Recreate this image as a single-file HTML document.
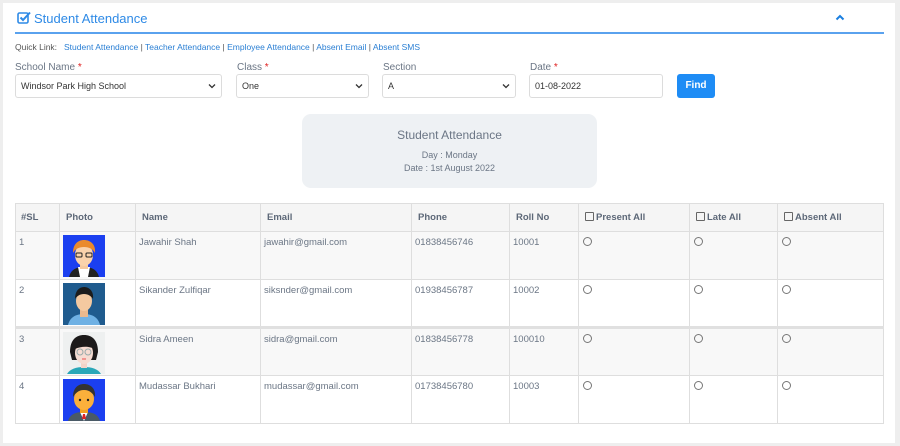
<!DOCTYPE html>
<html><head><style>
*{box-sizing:border-box;margin:0;padding:0}
body{width:900px;height:446px;background:#eeeeee;font-family:"Liberation Sans",sans-serif;position:relative;overflow:hidden;color:#6b7685}
.card{position:absolute;left:3px;top:3px;width:892px;height:440px;background:#fff}
.a{position:absolute;white-space:nowrap}
.sel{position:absolute;height:24px;border:1px solid #dcdcdc;border-radius:3px;background:#fff;font-size:9px;color:#333;padding:6px 5px;}
.sel svg{position:absolute;right:5px;top:8px}
.lbl{position:absolute;font-size:10px;color:#6b7685}
.lbl b{color:#e02020;font-weight:normal}
table{position:absolute;left:15px;top:203px;width:869px;border-collapse:collapse;font-size:9.5px}
td,th{border:1px solid #dedede;vertical-align:top;text-align:left;padding:0 3px;color:#6b7685}
th{height:28px;vertical-align:middle;font-weight:bold;background:#f5f5f5;color:#5d6878;padding:0 6px}
tr.r td{height:48px;padding-top:5px}
tr.g td{background:#f8f8f8}
.rad{display:inline-block;width:9px;height:9px;border:1px solid #777;border-radius:50%;margin-left:1px}
.cb{display:inline-block;width:9px;height:9px;border:1px solid #666;border-radius:1px;vertical-align:-1px;margin-right:2px}
.av{width:42px;height:42px;display:block;margin-top:-2px}
</style></head><body>
<div class="card"></div>
<svg class="a" style="left:17px;top:11px" width="14" height="13" viewBox="0 0 14 13"><rect x="1" y="2" width="10" height="10" rx="1.5" fill="none" stroke="#2e8ae6" stroke-width="1.6"/><path d="M3.5 6.5l2.5 2.5L13 1.5" fill="none" stroke="#2e8ae6" stroke-width="2"/></svg>
<div class="a" style="left:34px;top:11px;font-size:13px;color:#2e8ae6">Student Attendance</div>
<svg class="a" style="left:835px;top:14px" width="10" height="7" viewBox="0 0 10 7"><path d="M1.5 5.5L5 2l3.5 3.5" fill="none" stroke="#1a7fe0" stroke-width="2"/></svg>
<div class="a" style="left:15px;top:32px;width:869px;height:2px;background:#5aa2ee"></div>
<div class="a" style="left:15px;top:42px;font-size:8.5px;color:#555">Quick Link:</div>
<div class="a" style="left:64px;top:42px;font-size:8.5px;color:#2a7fd4">Student Attendance <span style="color:#555">|</span> Teacher Attendance <span style="color:#555">|</span> Employee Attendance <span style="color:#555">|</span> Absent Email <span style="color:#555">|</span> Absent SMS</div>
<div class="lbl" style="left:15px;top:62px">School Name <b>*</b></div>
<div class="lbl" style="left:237px;top:62px">Class <b>*</b></div>
<div class="lbl" style="left:383px;top:62px">Section</div>
<div class="lbl" style="left:530px;top:62px">Date <b>*</b></div>
<div class="sel" style="left:15px;top:74px;width:207px">Windsor Park High School<svg width="8" height="6"><path d="M1 1.5l3 3 3-3" fill="none" stroke="#333" stroke-width="1.3"/></svg></div>
<div class="sel" style="left:236px;top:74px;width:133px">One<svg width="8" height="6"><path d="M1 1.5l3 3 3-3" fill="none" stroke="#333" stroke-width="1.3"/></svg></div>
<div class="sel" style="left:382px;top:74px;width:134px">A<svg width="8" height="6"><path d="M1 1.5l3 3 3-3" fill="none" stroke="#333" stroke-width="1.3"/></svg></div>
<div class="sel" style="left:529px;top:74px;width:134px">01-08-2022</div>
<div class="a" style="left:677px;top:74px;width:38px;height:24px;background:#1e8cf5;border-radius:3px;color:#fff;font-size:10px;font-weight:bold;text-align:center;line-height:24px">Find</div>
<div class="a" style="left:302px;top:114px;width:295px;height:74px;background:#eef1f4;border-radius:9px;text-align:center">
<div style="font-size:12px;margin-top:14px;color:#6b7685">Student Attendance</div>
<div style="font-size:9px;margin-top:8px">Day : Monday</div>
<div style="font-size:9px;margin-top:3px">Date : 1st August 2022</div>
</div>
<table>
<tr><th style="width:44px;padding-left:5px">#SL</th><th style="width:76px">Photo</th><th style="width:125px">Name</th><th style="width:151px">Email</th><th style="width:98px">Phone</th><th style="width:69px">Roll No</th><th style="width:111px"><span class="cb"></span>Present All</th><th style="width:88px"><span class="cb"></span>Late All</th><th><span class="cb"></span>Absent All</th></tr>
<tr class="r g"><td>1</td><td><svg class="av" viewBox="0 0 42 42"><rect width="42" height="42" fill="#1b3ff0"/><path d="M6 42c2-8 8-10 15-10s13 2 15 10z" fill="#222"/><path d="M15 32h12l-2 10h-8z" fill="#fff"/><rect x="17" y="26" width="8" height="8" fill="#f5c9a0"/><ellipse cx="21" cy="20" rx="9" ry="11" fill="#fad2ab"/><path d="M10 18c0-9 5-13 11-13s12 4 11 13c-2-4-6-6-11-6s-9 2-11 6z" fill="#ea8a2c"/><rect x="13" y="18" width="6" height="4" rx="1" fill="none" stroke="#222" stroke-width="1"/><rect x="23" y="18" width="6" height="4" rx="1" fill="none" stroke="#222" stroke-width="1"/></svg></td><td>Jawahir Shah</td><td>jawahir@gmail.com</td><td>01838456746</td><td>10001</td><td><span class="rad"></span></td><td><span class="rad"></span></td><td><span class="rad"></span></td></tr>
<tr class="r"><td>2</td><td><svg class="av" viewBox="0 0 42 42"><rect width="42" height="42" fill="#1f5b8e"/><path d="M5 42c2-8 8-11 16-11s14 3 16 11z" fill="#6fb1e4"/><rect x="17" y="25" width="8" height="9" fill="#eab98e"/><ellipse cx="21" cy="18" rx="8" ry="10" fill="#f4c9a0"/><path d="M12 16c0-8 4-12 9-12s10 4 9 12c-2-3-5-5-9-5s-7 2-9 5z" fill="#1c1c1c"/></svg></td><td>Sikander Zulfiqar</td><td>siksnder@gmail.com</td><td>01938456787</td><td>10002</td><td><span class="rad"></span></td><td><span class="rad"></span></td><td><span class="rad"></span></td></tr>
<tr class="r g" style="border-top:3px solid #e0e0e0"><td>3</td><td><svg class="av" viewBox="0 0 42 42"><rect width="42" height="42" fill="#eef0f0"/><path d="M4 42c3-5 9-7 17-7s14 2 17 7z" fill="#2aa7b8"/><rect x="18" y="28" width="6" height="8" fill="#f3d3c8"/><path d="M7 20c0-12 6-17 14-17s14 5 14 17l-2 8H9z" fill="#1c1a1a"/><ellipse cx="21" cy="21" rx="9" ry="11" fill="#f6dcd2"/><path d="M12 17c2-6 6-8 10-8s7 2 9 8c-4-3-13-3-19 0z" fill="#1c1a1a"/><circle cx="17" cy="20" r="3" fill="none" stroke="#9aa" stroke-width="1"/><circle cx="25" cy="20" r="3" fill="none" stroke="#9aa" stroke-width="1"/><path d="M19 27h4" stroke="#e66" stroke-width="1.2"/></svg></td><td>Sidra Ameen</td><td>sidra@gmail.com</td><td>01838456778</td><td>100010</td><td><span class="rad"></span></td><td><span class="rad"></span></td><td><span class="rad"></span></td></tr>
<tr class="r"><td>4</td><td><svg class="av" viewBox="0 0 42 42"><rect width="42" height="42" fill="#1b3ff0"/><path d="M5 42c2-7 8-9 16-9s14 2 16 9z" fill="#4a5a66"/><path d="M17 33h8l-4 9z" fill="#fff"/><path d="M20 35h2l1 5h-4z" fill="#d22"/><rect x="17" y="26" width="8" height="8" fill="#f0a020"/><ellipse cx="21" cy="20" rx="10" ry="11" fill="#fbb03b"/><path d="M10 18c0-9 5-13 11-13s12 4 11 13c-2-3-5-7-11-7s-9 4-11 7z" fill="#333"/><circle cx="17" cy="21" r="1.2" fill="#222"/><circle cx="25" cy="21" r="1.2" fill="#222"/></svg></td><td>Mudassar Bukhari</td><td>mudassar@gmail.com</td><td>01738456780</td><td>10003</td><td><span class="rad"></span></td><td><span class="rad"></span></td><td><span class="rad"></span></td></tr>
</table>
</body></html>
